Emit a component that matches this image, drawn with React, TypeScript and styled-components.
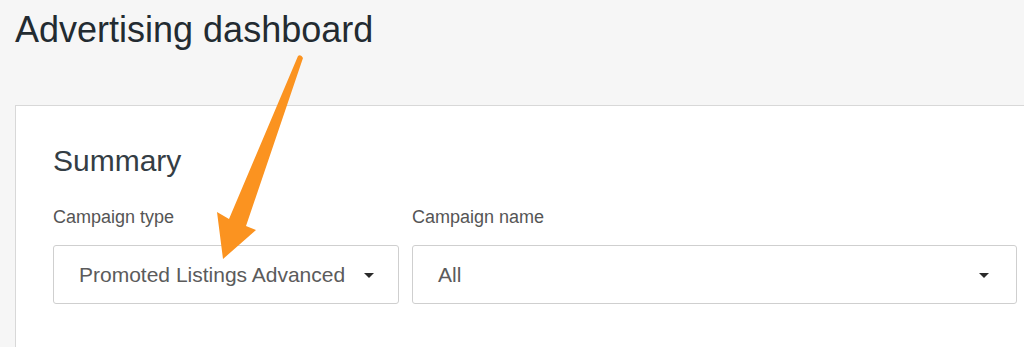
import styled, { createGlobalStyle } from 'styled-components';

const GlobalStyle = createGlobalStyle`
  html, body {
    margin: 0;
    padding: 0;
    background: #f6f6f6;
    overflow: hidden;
  }
  body {
    font-family: "Liberation Sans", Arial, sans-serif;
  }
`;

const Page = styled.div`
  position: relative;
  width: 1024px;
  height: 347px;
  overflow: hidden;
  padding: 10px 0 0 15px;
  box-sizing: border-box;
`;

const PageTitle = styled.h1`
  margin: 0;
  font-size: 36px;
  line-height: 40px;
  font-weight: 400;
  color: #232b31;
`;

// card runs off the right and bottom edges of the frame
const Card = styled.section`
  margin-top: 55px;
  width: 1030px;
  height: 250px;
  background: #fff;
  border: 1px solid #d8d8d8;
  box-sizing: border-box;
  padding: 38px 0 0 37px;
`;

const CardTitle = styled.h2`
  margin: 0;
  font-size: 30px;
  line-height: 34px;
  font-weight: 400;
  color: #343d44;
`;

const Filters = styled.div`
  display: flex;
  gap: 13px;
  margin-top: 28px;
`;

const Field = styled.div<{ $width: number }>`
  display: flex;
  flex-direction: column;
  width: ${p => p.$width}px;
`;

const Label = styled.label`
  font-size: 18px;
  line-height: 22px;
  color: #555;
  margin-bottom: 17px;
`;

const Select = styled.div<{ $caretGap: number }>`
  display: flex;
  align-items: center;
  justify-content: space-between;
  height: 59px;
  box-sizing: border-box;
  border: 1px solid #cfcfcf;
  border-radius: 3px;
  padding: 1px ${p => p.$caretGap}px 0 25px;
  font-size: 21px;
  color: #5b5b5b;
  background: #fff;
`;

const Caret = styled.span`
  width: 0;
  height: 0;
  border-left: 5px solid transparent;
  border-right: 5px solid transparent;
  border-top: 5px solid #2a2a2a;
`;

const Annotation = styled.svg`
  position: absolute;
  left: 0;
  top: 0;
  width: 1024px;
  height: 347px;
  pointer-events: none;
`;

export default function App() {
  return (
    <>
      <GlobalStyle />
      <Page>
        <PageTitle>Advertising dashboard</PageTitle>
        <Card>
          <CardTitle>Summary</CardTitle>
          <Filters>
            <Field $width={346}>
              <Label>Campaign type</Label>
              <Select $caretGap={24}>
                <span>Promoted Listings Advanced</span>
                <Caret />
              </Select>
            </Field>
            <Field $width={605}>
              <Label>Campaign name</Label>
              <Select $caretGap={27}>
                <span>All</span>
                <Caret />
              </Select>
            </Field>
          </Filters>
        </Card>
        <Annotation viewBox="0 0 1024 347">
          <path
            d="M298 56 Q301 54 303 58 L246 226 L256 230 L223 259 L217 212 L229 219 Z"
            fill="#fb9320"
          />
        </Annotation>
      </Page>
    </>
  );
}
